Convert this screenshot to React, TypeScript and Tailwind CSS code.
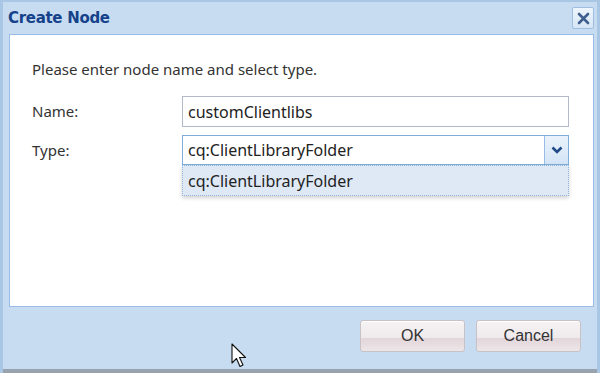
import React from "react";

function CloseIcon() {
  return (
    <svg width="13" height="13" viewBox="0 0 13 13">
      <path d="M2 2 L11 11 M11 2 L2 11" stroke="#3f5f8f" strokeWidth="2.6" strokeLinecap="round" />
    </svg>
  );
}

function Chevron() {
  return (
    <svg width="12" height="8" viewBox="0 0 12 8">
      <path d="M1.5 1.5 L6 6 L10.5 1.5" fill="none" stroke="#1f4a86" strokeWidth="2.6" />
    </svg>
  );
}

function Cursor() {
  return (
    <svg width="18" height="26" viewBox="0 0 18 26">
      <path d="M1 1 L1 20 L5.5 15.5 L9 23.5 L12 22 L8.5 14.5 L14.5 14.5 Z" fill="#fff" stroke="#111" strokeWidth="1.1" strokeLinejoin="round" />
    </svg>
  );
}

export default function App() {
  const body = { fontFamily: '"Noto Sans", "Open Sans", sans-serif' };

  return (
    <div className="w-[600px] h-[373px] bg-[#c7dcf0] border-l-[3px] border-t-[2px] border-r-[3px] border-[#a9c6e4] flex flex-col relative overflow-hidden">
      {/* Title bar */}
      <div className="h-[32px] flex items-center justify-between pl-[5px] pr-[3px]">
        <span
          className="text-[15px] font-bold text-[#15428b] tracking-[-0.3px]"
          style={{ fontFamily: '"DejaVu Sans", Verdana, sans-serif' }}
        >
          Create Node
        </span>
        <div className="w-[22px] h-[22px] flex items-center justify-center border border-[#9fbfe2] rounded-[2px] bg-gradient-to-b from-[#eef5fc] to-[#d6e6f5]">
          <CloseIcon />
        </div>
      </div>

      {/* Body */}
      <div
        className="ml-[6px] mr-[3px] h-[273px] bg-white border border-[#99bbe8] pt-[24px] pl-[22px] pr-[22px] text-[#333]"
        style={body}
      >
        <p className="text-[15px] leading-[20px]">Please enter node name and select type.</p>

        <div className="mt-[17px] flex items-center">
          <label className="w-[150px] text-[15px]">Name:</label>
          <div className="w-[387px] h-[31px] border border-[#b5b8c8] bg-white flex items-center px-[5px] text-[16px] text-[#222]">
            customClientlibs
          </div>
        </div>

        <div className="mt-[8px] flex items-start">
          <label className="w-[150px] text-[15px] leading-[30px]">Type:</label>
          <div className="relative w-[387px]">
            <div className="h-[30px] border border-[#7eadd9] bg-white flex items-center">
              <span className="flex-1 px-[5px] text-[16px] text-[#222]">cq:ClientLibraryFolder</span>
              <div className="w-[24px] h-full border-l border-[#99bbe8] bg-gradient-to-b from-[#eaf3fc] to-[#d4e5f6] flex items-center justify-center">
                <Chevron />
              </div>
            </div>
            <div className="absolute left-0 right-0 top-[30px] h-[31px] bg-[#dfe9f6] border border-dotted border-[#8fb4de] shadow-[0_2px_4px_rgba(0,0,0,0.18)] flex items-center px-[5px] text-[16px] text-[#222]">
              cq:ClientLibraryFolder
            </div>
          </div>
        </div>
      </div>

      {/* Footer */}
      <div
        className="flex justify-end gap-[11px] pr-[16px] pt-[13px]"
        style={{ fontFamily: '"Liberation Sans", Arial, sans-serif' }}
      >
        {["OK", "Cancel"].map((t) => (
          <button
            key={t}
            className="w-[105px] h-[32px] rounded-[3px] border border-[#c8c2c6] text-[16px] text-[#333] bg-[linear-gradient(#f6f3f4_0%,#efeaec_55%,#e2d5d9_56%,#ece6e8_100%)] shadow-[inset_0_1px_0_#fff]"
          >
            {t}
          </button>
        ))}
      </div>

      <div className="absolute left-0 right-0 bottom-0 h-[4px] bg-[#98a3ad]" />

      <div className="absolute left-[228px] top-[341px]">
        <Cursor />
      </div>
    </div>
  );
}
